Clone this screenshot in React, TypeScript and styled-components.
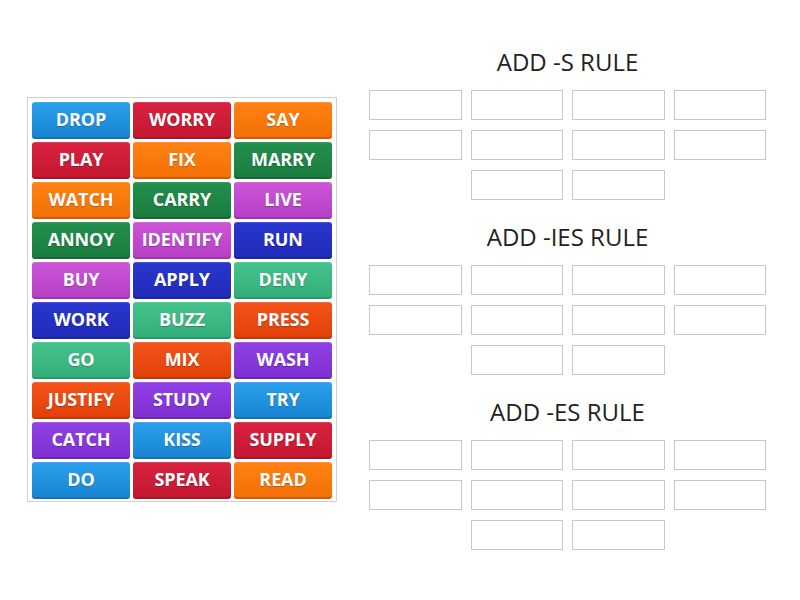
import React from "react";
import styled, { createGlobalStyle } from "styled-components";

const Global = createGlobalStyle`
  html, body { margin: 0; padding: 0; background: #fff; }
  body { font-family: "Open Sans", "Liberation Sans", sans-serif; }
`;

const palette: Record<string, [string, string]> = {
  blue: ["#2aa0ec", "#1884d2"],
  red: ["#d9223f", "#c2182f"],
  orange: ["#ff8213", "#f26f05"],
  green: ["#22914d", "#1a7a3e"],
  magenta: ["#cc55d8", "#b53fc4"],
  darkblue: ["#2a37cf", "#1f2ab6"],
  teal: ["#44c38c", "#34ad78"],
  redorange: ["#f5541a", "#e04008"],
  purple: ["#9241e6", "#7c2fd0"],
};

type Word = [string, keyof typeof palette];

const words: Word[] = [
  ["DROP", "blue"], ["WORRY", "red"], ["SAY", "orange"],
  ["PLAY", "red"], ["FIX", "orange"], ["MARRY", "green"],
  ["WATCH", "orange"], ["CARRY", "green"], ["LIVE", "magenta"],
  ["ANNOY", "green"], ["IDENTIFY", "magenta"], ["RUN", "darkblue"],
  ["BUY", "magenta"], ["APPLY", "darkblue"], ["DENY", "teal"],
  ["WORK", "darkblue"], ["BUZZ", "teal"], ["PRESS", "redorange"],
  ["GO", "teal"], ["MIX", "redorange"], ["WASH", "purple"],
  ["JUSTIFY", "redorange"], ["STUDY", "purple"], ["TRY", "blue"],
  ["CATCH", "purple"], ["KISS", "blue"], ["SUPPLY", "red"],
  ["DO", "blue"], ["SPEAK", "red"], ["READ", "orange"],
];

const Page = styled.div`
  display: flex;
  align-items: flex-start;
  gap: 32px;
  padding-left: 27px;
  padding-top: 47px;
`;

const Bank = styled.div`
  margin-top: 50px;
  width: 310px;
  box-sizing: border-box;
  border: 1px solid #d0d0d0;
  padding: 4px 4px 2px 4px;
  display: grid;
  grid-template-columns: repeat(3, 98px);
  grid-auto-rows: 37px;
  column-gap: 3px;
  row-gap: 3px;
  background: #fff;
`;

const Tile = styled.div<{ $top: string; $bottom: string }>`
  display: flex;
  align-items: center;
  justify-content: center;
  border-radius: 3px;
  background: linear-gradient(to bottom, ${(p) => p.$top}, ${(p) => p.$bottom});
  box-shadow: inset 0 -2px 0 rgba(0, 0, 0, 0.14), inset 0 1px 0 rgba(255, 255, 255, 0.12);
  color: #fff;
  font-weight: 700;
  font-size: 18px;
  letter-spacing: -0.1px;
  text-shadow: 0 1px 1px rgba(0, 0, 0, 0.25);
  padding-bottom: 3px;
  box-sizing: border-box;
`;

const Groups = styled.div`
  width: 397px;
  display: flex;
  flex-direction: column;
  gap: 22px;
`;

const Group = styled.section`
  display: flex;
  flex-direction: column;
`;

const Heading = styled.h2`
  margin: 0 0 13px 0;
  height: 30px;
  line-height: 30px;
  text-align: center;
  font-weight: 400;
  font-size: 24px;
  color: #222;
`;

const Slots = styled.div`
  display: grid;
  grid-template-columns: repeat(4, 1fr);
  grid-auto-rows: 30px;
  column-gap: 9px;
  row-gap: 10px;
`;

const Slot = styled.div<{ $col?: number }>`
  box-sizing: border-box;
  border: 1px solid #c9c9c9;
  background: #fff;
  ${(p) => (p.$col ? `grid-column: ${p.$col};` : "")}
`;

const groups = ["ADD -S RULE", "ADD -IES RULE", "ADD -ES RULE"];

export default function App() {
  return (
    <>
      <Global />
      <Page>
        <Bank>
          {words.map(([w, c]) => (
            <Tile key={w} $top={palette[c][0]} $bottom={palette[c][1]}>
              {w}
            </Tile>
          ))}
        </Bank>
        <Groups>
          {groups.map((g) => (
            <Group key={g}>
              <Heading>{g}</Heading>
              <Slots>
                {Array.from({ length: 8 }).map((_, i) => (
                  <Slot key={i} />
                ))}
                <Slot $col={2} />
                <Slot $col={3} />
              </Slots>
            </Group>
          ))}
        </Groups>
      </Page>
    </>
  );
}
